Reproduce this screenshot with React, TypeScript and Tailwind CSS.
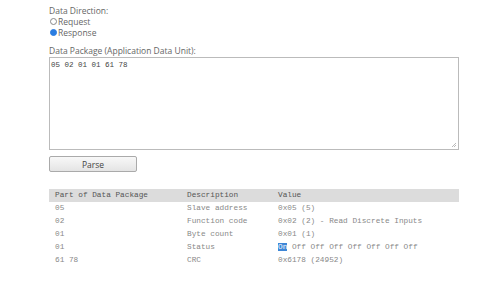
import React from "react";

const rows = [
  { part: "05", desc: "Slave address", value: "0x05 (5)" },
  { part: "02", desc: "Function code", value: "0x02 (2) - Read Discrete Inputs" },
  { part: "01", desc: "Byte count", value: "0x01 (1)" },
  { part: "01", desc: "Status", value: null },
  { part: "61 78", desc: "CRC", value: "0x6178 (24952)" },
];

export default function App() {
  return (
    <div className="w-[497px] h-[292px] bg-white pl-[49px] pt-[5px] text-[#666] font-['Open_Sans',sans-serif] text-[8.5px] leading-[11px]">
      <div>Data Direction:</div>
      <label className="flex items-center h-[11px]">
        <span className="ml-[1px] mr-[1px] w-[7px] h-[7px] rounded-full border border-[#888] bg-white" />
        Request
      </label>
      <label className="flex items-center h-[11px]">
        <span className="ml-[1px] mr-[1px] w-[7px] h-[7px] rounded-full bg-[#2a7de1] border border-[#2a7de1]" />
        Response
      </label>
      <div className="mt-[7px]">Data Package (Application Data Unit):</div>
      <div className="relative mt-[1px] w-[410px] h-[93px] border border-[#bbb] bg-white px-[1px] py-[2px] font-['Liberation_Mono',monospace] text-[7.5px] leading-[10px] text-[#444]">
        05 02 01 01 61 78
        <svg className="absolute right-[1px] bottom-[1px]" width="6" height="6" viewBox="0 0 6 6">
          <path d="M1 5 L5 1 M3 5 L5 3" stroke="#aaa" strokeWidth="0.8" />
        </svg>
      </div>
      <button className="mt-[6px] w-[88px] h-[16px] border border-[#aaa] rounded-[2px] bg-gradient-to-b from-[#f8f8f8] to-[#e4e4e4] text-[8.5px] text-[#444] flex items-center justify-center">
        Parse
      </button>
      <div className="mt-[17px] w-[410px] font-['Liberation_Mono',monospace] text-[7.75px] text-[#888]">
        <div className="flex h-[13px] items-center bg-[#dcdcdc] text-[#555]">
          <span className="w-[138px] pl-[6px]">Part of Data Package</span>
          <span className="w-[91px]">Description</span>
          <span>Value</span>
        </div>
        {rows.map((r, i) => (
          <div key={i} className="flex h-[13px] items-center">
            <span className="w-[138px] pl-[6px]">{r.part}</span>
            <span className="w-[91px]">{r.desc}</span>
            <span>
              {r.value ?? (
                <>
                  <span className="bg-[#3d86d6] text-white">On</span> Off Off Off Off Off Off Off
                </>
              )}
            </span>
          </div>
        ))}
      </div>
    </div>
  );
}
